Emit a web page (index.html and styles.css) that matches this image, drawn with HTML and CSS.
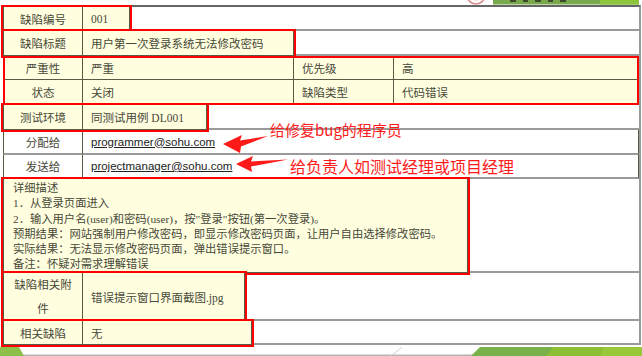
FILE: index.html
```html
<!DOCTYPE html>
<html lang="zh-CN">
<head>
<meta charset="utf-8">
<title>缺陷报告</title>
<link rel="stylesheet" href="styles.css">
</head>
<body>
<div class="slide">
  <div class="top">
    <svg width="642" height="5" viewBox="0 0 642 5">
      <circle cx="476" cy="-5" r="9" fill="#fff" stroke="#d98a8a" stroke-width="1.5"/>
      <circle cx="476" cy="-5" r="5" fill="none" stroke="#e0b0b0" stroke-width="1"/>
      <rect x="493" y="0" width="146" height="4.5" fill="#7aa84c"/>
      <rect x="600" y="0" width="39" height="4.5" fill="#8cc43a"/>
      <rect x="510" y="0" width="6" height="2" fill="#3c4a2c"/>
      <rect x="523" y="0" width="5" height="2" fill="#3c4a2c"/>
      <rect x="535" y="0" width="6" height="2" fill="#3c4a2c"/>
      <rect x="548" y="0" width="5" height="2" fill="#3c4a2c"/>
      <rect x="560" y="0" width="6" height="2" fill="#3c4a2c"/>
    </svg>
  </div>

  <div class="tbl">
    <div class="row h24">
      <div class="hl w127">
        <div class="cell lbl">缺陷编号</div>
        <div class="cell val">001</div>
      </div>
      <div class="rest"></div>
    </div>

    <div class="row h25">
      <div class="hl w291">
        <div class="cell lbl">缺陷标题</div>
        <div class="cell val">用户第一次登录系统无法修改密码</div>
      </div>
      <div class="rest"></div>
    </div>

    <div class="hlblock">
      <div class="row h24">
        <div class="cell lbl">严重性</div>
        <div class="cell val2">严重</div>
        <div class="cell lbl2">优先级</div>
        <div class="cell val">高</div>
      </div>
      <div class="row h25">
        <div class="cell lbl">状态</div>
        <div class="cell val2">关闭</div>
        <div class="cell lbl2">缺陷类型</div>
        <div class="cell val">代码错误</div>
      </div>
    </div>

    <div class="row h25">
      <div class="hl w204">
        <div class="cell lbl">测试环境</div>
        <div class="cell val">同测试用例 DL001</div>
      </div>
      <div class="rest"></div>
    </div>

    <div class="row h25">
      <div class="cell lbl white">分配给</div>
      <div class="cell val white"><a class="mail" href="#">programmer@sohu.com</a></div>
    </div>

    <div class="row h24">
      <div class="cell lbl white">发送给</div>
      <div class="cell val white"><a class="mail" href="#">projectmanager@sohu.com</a></div>
    </div>

    <div class="row h94">
      <div class="hl w465">
        <div class="cell desc">
          <div>详细描述</div>
          <div>1．从登录页面进入</div>
          <div>2．输入用户名(user)和密码(user)，按"登录"按钮(第一次登录)。</div>
          <div>预期结果：网站强制用户修改密码，即显示修改密码页面，让用户自由选择修改密码。</div>
          <div>实际结果：无法显示修改密码页面，弹出错误提示窗口。</div>
          <div>备注：怀疑对需求理解错误</div>
        </div>
      </div>
      <div class="rest"></div>
    </div>

    <div class="row h48">
      <div class="hl w242">
        <div class="cell lbl two">缺陷相关附<br>件</div>
        <div class="cell val">错误提示窗口界面截图.jpg</div>
      </div>
      <div class="rest"></div>
    </div>

    <div class="row h24">
      <div class="hl w249">
        <div class="cell lbl">相关缺陷</div>
        <div class="cell val">无</div>
      </div>
      <div class="rest"></div>
    </div>
  </div>

  <div class="foot">
    <svg width="642" height="11" viewBox="0 0 642 11">
      <rect x="0" y="9.5" width="642" height="1.5" fill="#b5b5b5"/>
      <polygon points="0,2 19,2 24,11 0,11" fill="#8cc04b"/>
      <line x1="391" y1="11" x2="402" y2="2" stroke="#d0d0d0" stroke-width="1"/>
      <polygon points="471,11 480,2 642,2 642,11" fill="#78b04a"/>
      <polygon points="546,11 553,2 642,2 642,11" fill="#8cbf36"/>
      <polygon points="600,11 604,2 642,2 642,11" fill="#98c83a"/>
    </svg>
  </div>

  <div class="note n1">给修复bug的程序员</div>
  <div class="note n2">给负责人如测试经理或项目经理</div>

  <svg class="arrows" width="642" height="356" viewBox="0 0 642 356">
    <polygon points="223,144 242,135 240,140.5 268,136 241,146.5 240,153" fill="#ff1a1a"/>
    <polygon points="236,164 253,156 251,161.5 288,159.5 251,166.5 252,172" fill="#ff1a1a"/>
  </svg>
</div>
</body>
</html>
```

FILE: styles.css
```css
* {
  box-sizing: border-box;
}

body {
  margin: 0;
  background: #fff;
}

.slide {
  position: relative;
  width: 642px;
  height: 356px;
  overflow: hidden;
  background: #fff;
  font-family: "Liberation Serif", "Noto Sans CJK SC", serif;
  font-size: 11.5px;
  color: #474738;
}

.top {
  height: 5px;
  display: flex;
}

.top svg,
.foot svg {
  display: block;
}

.tbl {
  margin-left: 3px;
  width: 638px;
  border-top: 2px solid #666;
  border-right: 2px solid #9a9a9a;
}

.row {
  display: flex;
}

.h24 { height: 24px; }
.h25 { height: 25px; }
.h48 { height: 48px; }
.h94 { height: 94px; }

.w127 { width: 127px; }
.w204 { width: 204px; }
.w242 { width: 242px; }
.w249 { width: 249px; }
.w291 { width: 291px; }
.w465 { width: 465px; }

.hl {
  display: flex;
  flex: none;
  background: #ffffe0;
  outline: 2px solid #ff0000;
  position: relative;
  z-index: 1;
}

.hlblock {
  background: #ffffe0;
  outline: 2px solid #ff0000;
  outline-offset: -2px;
  position: relative;
  z-index: 1;
}

.rest {
  flex: 1;
  border-bottom: 2px solid #9a9a9a;
}

.cell {
  display: flex;
  align-items: center;
  white-space: nowrap;
  border-right: 1px solid #5b5b45;
  border-bottom: 1px solid #5b5b45;
}

.lbl {
  flex: none;
  width: 80px;
  justify-content: center;
  border-left: 1px solid #5b5b45;
}

.val {
  flex: 1;
  padding-left: 8px;
}

.val2 {
  flex: none;
  width: 211px;
  padding-left: 8px;
}

.lbl2 {
  flex: none;
  width: 100px;
  padding-left: 8px;
}

.white {
  background: #fff;
  border-bottom: 2px solid #9a9a9a;
}

.two {
  text-align: center;
  line-height: 24px;
}

.desc {
  flex: 1;
  display: block;
  padding: 2px 9px 0 9px;
  line-height: 15.3px;
  font-size: 11.3px;
  border-left: 1px solid #5b5b45;
}

.mail {
  font-family: "Liberation Sans", Arial, sans-serif;
  font-size: 11.5px;
  color: #222;
  text-decoration: underline;
}

.foot {
  height: 11px;
}

.note {
  position: absolute;
  z-index: 3;
  color: #ff1a1a;
  font-family: "Noto Sans CJK SC", "Liberation Sans", sans-serif;
  white-space: nowrap;
}

.n1 {
  left: 270px;
  top: 121px;
  font-size: 15px;
  line-height: 17px;
}

.n2 {
  left: 290px;
  top: 157px;
  font-size: 16px;
  line-height: 18px;
}

.arrows {
  position: absolute;
  left: 0;
  top: 0;
  z-index: 3;
  pointer-events: none;
}
```
